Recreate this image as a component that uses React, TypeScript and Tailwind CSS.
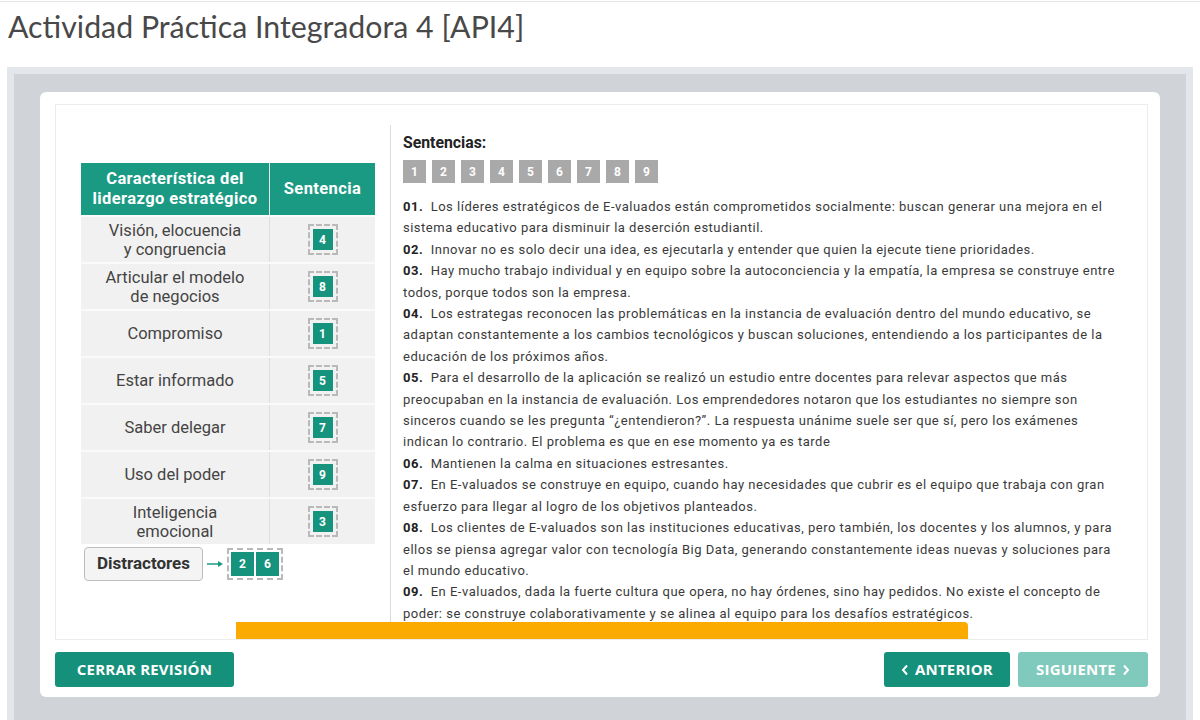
const rows = [
  { label: ['Visión, elocuencia', 'y congruencia'], n: '4' },
  { label: ['Articular el modelo', 'de negocios'], n: '8' },
  { label: ['Compromiso'], n: '1' },
  { label: ['Estar informado'], n: '5' },
  { label: ['Saber delegar'], n: '7' },
  { label: ['Uso del poder'], n: '9' },
  { label: ['Inteligencia', 'emocional'], n: '3' },
];

// each sentence is split into the lines shown on screen
const sentences: string[][] = [
  [
    'Los líderes estratégicos de E-valuados están comprometidos socialmente: buscan generar una mejora en el',
    'sistema educativo para disminuir la deserción estudiantil.',
  ],
  ['Innovar no es solo decir una idea, es ejecutarla y entender que quien la ejecute tiene prioridades.'],
  [
    'Hay mucho trabajo individual y en equipo sobre la autoconciencia y la empatía, la empresa se construye entre',
    'todos, porque todos son la empresa.',
  ],
  [
    'Los estrategas reconocen las problemáticas en la instancia de evaluación dentro del mundo educativo, se',
    'adaptan constantemente a los cambios tecnológicos y buscan soluciones, entendiendo a los participantes de la',
    'educación de los próximos años.',
  ],
  [
    'Para el desarrollo de la aplicación se realizó un estudio entre docentes para relevar aspectos que más',
    'preocupaban en la instancia de evaluación. Los emprendedores notaron que los estudiantes no siempre son',
    'sinceros cuando se les pregunta “¿entendieron?”. La respuesta unánime suele ser que sí, pero los exámenes',
    'indican lo contrario. El problema es que en ese momento ya es tarde',
  ],
  ['Mantienen la calma en situaciones estresantes.'],
  [
    'En E-valuados se construye en equipo, cuando hay necesidades que cubrir es el equipo que trabaja con gran',
    'esfuerzo para llegar al logro de los objetivos planteados.',
  ],
  [
    'Los clientes de E-valuados son las instituciones educativas, pero también, los docentes y los alumnos, y para',
    'ellos se piensa agregar valor con tecnología Big Data, generando constantemente ideas nuevas y soluciones para',
    'el mundo educativo.',
  ],
  [
    'En E-valuados, dada la fuerte cultura que opera, no hay órdenes, sino hay pedidos. No existe el concepto de',
    'poder: se construye colaborativamente y se alinea al equipo para los desafíos estratégicos.',
  ],
];

const AnswerChip = ({ n }: { n: string }) => (
  <div className="border-2 border-dashed border-[#b9b9b9] p-[3px]">
    <div className="w-[20px] h-[21px] bg-[#16937d] text-white text-[12px] font-bold flex items-center justify-center">
      {n}
    </div>
  </div>
);

export default function App() {
  return (
    <div className="w-[1200px] h-[720px] bg-white overflow-hidden font-['Roboto',sans-serif]">
      <div className="h-[2px] border-b border-[#e6e6e6]" />

      {/* Title */}
      <div className="h-[65px] pl-[8px] pt-[6px]">
        <h1 className="font-['Lato',sans-serif] text-[30.3px] text-[#484848] leading-[36px]">
          Actividad Práctica Integradora 4 [API4]
        </h1>
      </div>

      {/* Gray frame */}
      <div className="mx-[7px] h-[653px] bg-[#e3e6ea] px-[7px] pt-[7px]">
        <div className="h-full bg-[#d0d4d8] px-[26px] pt-[18px]">
          <div className="h-[605px] bg-white rounded-[6px] pl-[15px] pr-[12px] pt-[12px] flex flex-col">
            {/* Activity box */}
            <div className="relative h-[536px] border border-[#ececec] flex overflow-hidden">
              {/* Left: table */}
              <div className="w-[334px] shrink-0 pl-[25px] pt-[58px]">
                <div className="w-[294px]">
                  <div className="flex bg-[#1b9a83] text-white font-bold text-[16.5px] tracking-[0.4px] leading-[20px] h-[52px]">
                    <div className="w-[189px] flex items-center justify-center text-center border-r border-[#e6e6e6]">
                      <span>
                        <span className="block">Característica del</span>
                        <span className="block">liderazgo estratégico</span>
                      </span>
                    </div>
                    <div className="flex-1 flex items-center justify-center">Sentencia</div>
                  </div>
                  {rows.map((r) => (
                    <div key={r.n} className="flex h-[47px] bg-[#f1f1f1] border-t-2 border-[#fafafa]">
                      <div className="w-[189px] flex items-center justify-center text-center text-[16.5px] leading-[19px] text-[#444] border-r border-[#dedede]">
                        <span>
                          {r.label.map((l, i) => (
                            <span key={i} className="block">{l}</span>
                          ))}
                        </span>
                      </div>
                      <div className="flex-1 flex items-center justify-center">
                        <AnswerChip n={r.n} />
                      </div>
                    </div>
                  ))}
                </div>

                <div className="flex items-center mt-[3px] ml-[3px]">
                  <div className="w-[119px] h-[34px] border border-[#bdbdbd] rounded-[4px] bg-[#f4f4f4] flex items-center justify-center text-[17px] font-bold text-[#333]">
                    Distractores
                  </div>
                  <svg width="20" height="10" viewBox="0 0 20 10" className="mx-[2px]">
                    <line x1="2" y1="5" x2="14" y2="5" stroke="#1b9a83" strokeWidth="1.5" />
                    <path d="M13 2 L18 5 L13 8 Z" fill="#1b9a83" />
                  </svg>
                  <div className="flex gap-[2px] border-2 border-dashed border-[#b9b9b9] p-[2px]">
                    <div className="w-[23px] h-[24px] bg-[#16937d] text-white text-[12px] font-bold flex items-center justify-center">2</div>
                    <div className="w-[23px] h-[24px] bg-[#16937d] text-white text-[12px] font-bold flex items-center justify-center">6</div>
                  </div>
                </div>
              </div>

              {/* Right: sentences */}
              <div className="flex-1 mt-[20px] border-l border-[#dcdcdc] pl-[12px] pr-[20px] pt-[8px]">
                <div className="text-[15.8px] font-bold text-[#222] leading-[20px]">Sentencias:</div>
                <div className="flex gap-[6px] mt-[7px]">
                  {['1', '2', '3', '4', '5', '6', '7', '8', '9'].map((n) => (
                    <div key={n} className="w-[23px] h-[23px] bg-[#a9a9a9] text-white text-[12px] font-bold flex items-center justify-center">
                      {n}
                    </div>
                  ))}
                </div>
                <div className="mt-[13px] text-[13px] tracking-[0.5px] leading-[21.4px] text-[#3a3a3a] whitespace-nowrap">
                  {sentences.map((lines, i) => (
                    <div key={i}>
                      {lines.map((line, j) => (
                        <div key={j}>
                          {j === 0 ? (
                            <>
                              <b className="text-[#222]">0{i + 1}.</b>
                              {'\u00a0 '}
                              {line}
                            </>
                          ) : (
                            line
                          )}
                        </div>
                      ))}
                    </div>
                  ))}
                </div>
              </div>

              {/* Orange bar */}
              <div className="absolute left-[180px] bottom-0 w-[732px] h-[17px] bg-[#fbab00] rounded-tr-[4px]" />
            </div>

            {/* Buttons */}
            <div className="flex items-center justify-between mt-[12px] font-['Open_Sans',sans-serif]">
              <button className="w-[179px] h-[35px] bg-[#15917b] rounded-[3px] text-white text-[15px] font-bold tracking-[0.2px]">
                CERRAR REVISIÓN
              </button>
              <div className="flex gap-[8px]">
                <button className="w-[126px] h-[35px] bg-[#15917b] rounded-[3px] text-white text-[15px] font-bold tracking-[0.2px] flex items-center justify-center gap-[6px]">
                  <svg width="8" height="12" viewBox="0 0 8 12"><path d="M6 1.5 L2 6 L6 10.5" stroke="white" strokeWidth="2" fill="none" /></svg>
                  ANTERIOR
                </button>
                <button className="w-[130px] h-[35px] bg-[#80cabd] rounded-[3px] text-white text-[15px] font-bold tracking-[0.2px] flex items-center justify-center gap-[6px]">
                  SIGUIENTE
                  <svg width="8" height="12" viewBox="0 0 8 12"><path d="M2 1.5 L6 6 L2 10.5" stroke="white" strokeWidth="2" fill="none" /></svg>
                </button>
              </div>
            </div>
          </div>
        </div>
      </div>
    </div>
  );
}
